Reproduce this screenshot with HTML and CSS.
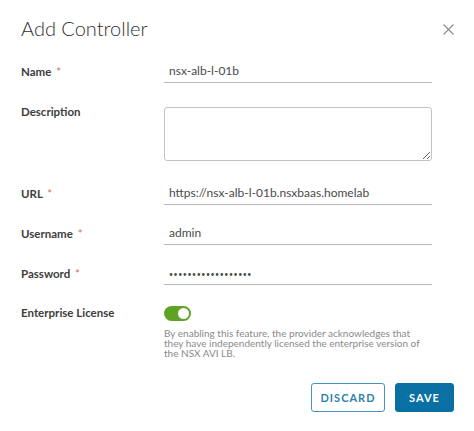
FILE: index.html
```html
<!DOCTYPE html>
<html lang="en">
<head>
<meta charset="utf-8">
<title>Add Controller</title>
<link rel="stylesheet" href="styles.css">
</head>
<body>
<div class="modal">
  <header class="modal-header">
    <h1 class="title">Add Controller</h1>
    <button class="close" type="button" aria-label="Close">
      <svg width="11" height="11" viewBox="0 0 11 11"><path d="M0.5 0.5 L10.5 10.5 M10.5 0.5 L0.5 10.5" stroke="#8a8a8a" stroke-width="1.1" fill="none"/></svg>
    </button>
  </header>
  <div class="form">
    <div class="row">
      <div class="label">Name <span class="req">*</span></div>
      <div class="field">nsx-alb-l-01b</div>
    </div>
    <div class="row row-area">
      <div class="label label-area">Description</div>
      <textarea class="area" readonly></textarea>
    </div>
    <div class="row">
      <div class="label">URL <span class="req">*</span></div>
      <div class="field">https://nsx-alb-l-01b.nsxbaas.homelab</div>
    </div>
    <div class="row">
      <div class="label">Username <span class="req">*</span></div>
      <div class="field">admin</div>
    </div>
    <div class="row">
      <div class="label">Password <span class="req">*</span></div>
      <div class="field field-pass">••••••••••••••••••</div>
    </div>
    <div class="row row-toggle">
      <div class="label label-toggle">Enterprise License</div>
      <div class="toggle-col">
        <span class="toggle"><span class="knob"></span></span>
        <p class="help">By enabling this feature, the provider acknowledges that<br>they have independently licensed the enterprise version of<br>the NSX AVI LB.</p>
      </div>
    </div>
  </div>
  <footer class="footer">
    <button class="btn btn-outline" type="button">DISCARD</button>
    <button class="btn btn-primary" type="button">SAVE</button>
  </footer>
</div>
</body>
</html>
```
FILE: styles.css
```css
* { box-sizing: border-box; }
html, body { margin: 0; padding: 0; background: #fff; }
body { font-family: "Lato", "Open Sans", sans-serif; color: #454545; }

.modal {
  width: 474px;
  height: 431px;
  padding: 16px 20px 0 21px;
}

.modal-header {
  display: flex;
  justify-content: space-between;
  align-items: flex-start;
  margin-bottom: 18px;
}
.title {
  margin: 0;
  font-size: 20px;
  line-height: 24px;
  font-weight: 300;
  color: #313131;
}
.close {
  border: 0;
  background: none;
  padding: 0;
  margin: 8px 0 0 0;
  width: 11px;
  height: 11px;
  display: flex;
}

.form { display: flex; flex-direction: column; gap: 15px; }
.row { display: flex; align-items: flex-start; }
.label {
  width: 143px;
  flex: none;
  font-size: 11.5px;
  font-weight: 700;
  line-height: 23px;
  padding-top: 2px;
  color: #3d3d3d;
}
.req { color: #e06a6a; font-weight: 400; margin-left: 2px; }
.field {
  width: 268px;
  height: 25px;
  border-bottom: 1px solid #b8b8b8;
  padding: 2px 0 0 5px;
  font-size: 12px;
  line-height: 22px;
  color: #4a4a4a;
}
.field-pass { letter-spacing: 0.55px; font-size: 7px; padding-top: 3px; }

.row-area { margin-top: 9px; margin-bottom: 4px; }
.label-area { line-height: 14px; margin-top: -2px; padding-top: 0; }
.area {
  width: 268px;
  height: 54px;
  border: 1px solid #c4c4c4;
  border-radius: 3px;
  margin: 0;
  padding: 4px;
  resize: both;
  font-family: inherit;
  background: #fff;
}

.row-toggle { margin-top: 6px; }
.label-toggle { line-height: 16px; padding-top: 0; margin-top: -1px; }
.toggle-col { display: flex; flex-direction: column; }
.toggle {
  width: 27px;
  height: 15px;
  border-radius: 8px;
  background: #5ea326;
  position: relative;
  display: block;
}
.knob {
  position: absolute;
  right: 2px;
  top: 2px;
  width: 11px;
  height: 11px;
  border-radius: 50%;
  background: #fff;
}
.help {
  margin: 7px 0 0 0;
  font-size: 10px;
  line-height: 10px;
  color: #8a8a8a;
}

.footer {
  display: flex;
  justify-content: flex-end;
  gap: 10px;
  margin-top: 25px;
  padding-right: 0;
}
.btn {
  height: 29px;
  border-radius: 3px;
  font-family: inherit;
  font-size: 11px;
  font-weight: 700;
  letter-spacing: 1px;
  padding: 0;
  cursor: pointer;
}
.btn-outline {
  width: 74px;
  background: #fff;
  border: 1px solid #4a93c0;
  color: #2f7fad;
}
.btn-primary {
  width: 59px;
  background: #0a6fa2;
  border: 1px solid #0a6fa2;
  color: #fff;
}
```
